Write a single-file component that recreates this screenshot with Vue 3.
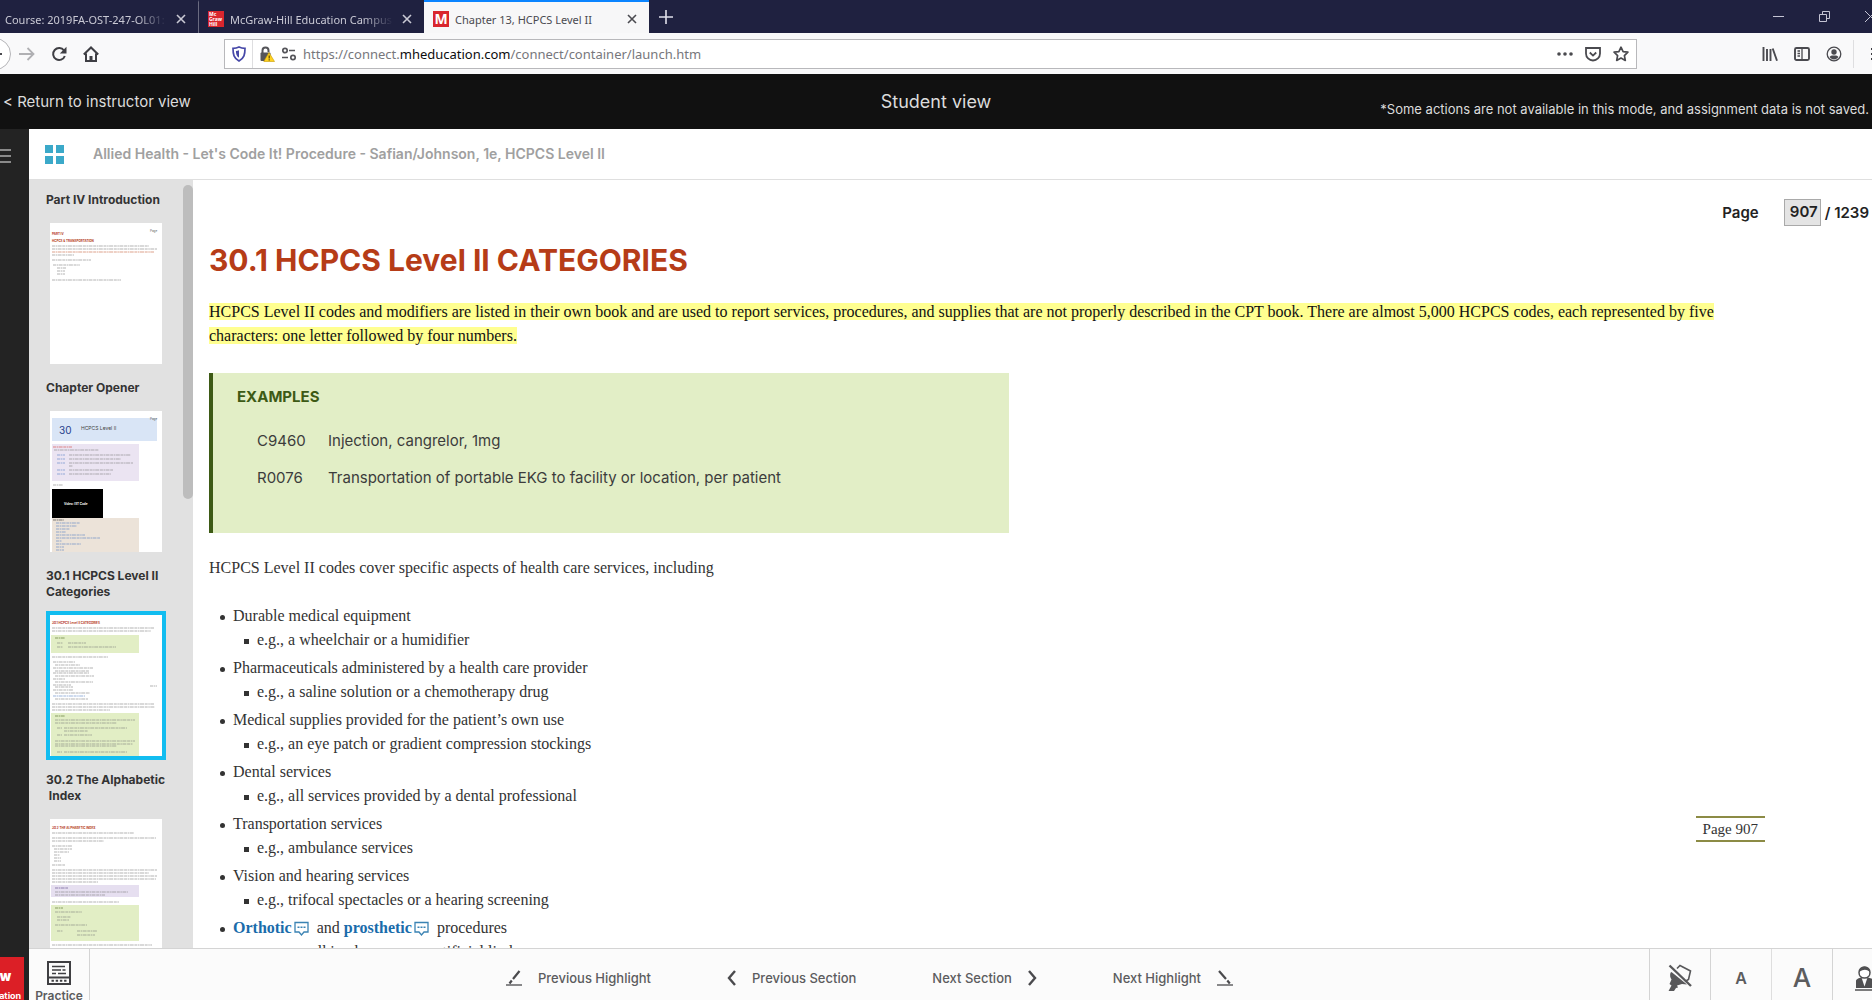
<template>
  <div class="screen">
    <header class="browser">
      <div class="tabs">
        <div
          v-for="tab in tabs"
          :key="tab.title"
          class="tab"
          :class="{ active: tab.active, first: tab.first }"
        >
          <svg v-if="tab.icon === 'mgh'" class="favicon" viewBox="0 0 16 16" aria-hidden="true">
            <rect width="16" height="16" fill="#d9262e" />
            <text x="1" y="5" class="fav-small">Mc</text>
            <text x="1" y="10" class="fav-small">Graw</text>
            <text x="1" y="15" class="fav-small">Hill</text>
          </svg>
          <svg v-if="tab.icon === 'm'" class="favicon" viewBox="0 0 16 16" aria-hidden="true">
            <rect width="16" height="16" fill="#d9262e" />
            <text x="8" y="13" text-anchor="middle" class="fav-big">M</text>
          </svg>
          <span class="tab-title" :class="{ faded: !tab.active }">{{ tab.title }}</span>
          <button class="tab-close" aria-label="Close tab">
            <svg width="10" height="10" viewBox="0 0 10 10">
              <path d="M1 1l8 8M9 1l-8 8" stroke="currentColor" stroke-width="1.6" />
            </svg>
          </button>
        </div>
        <button class="new-tab" aria-label="New tab">
          <svg width="14" height="14" viewBox="0 0 14 14">
            <path d="M7 0v14M0 7h14" stroke="#e0e0ea" stroke-width="1.6" />
          </svg>
        </button>
        <div class="window-buttons">
          <button aria-label="Minimize">
            <svg width="11" height="11" viewBox="0 0 11 11"><path d="M0 5.5h11" stroke="#c4c4d4" /></svg>
          </button>
          <button aria-label="Restore">
            <svg width="11" height="11" viewBox="0 0 11 11">
              <path d="M.5 3.5h7v7h-7zM3.5 3V.5h7v7H8" fill="none" stroke="#c4c4d4" />
            </svg>
          </button>
          <button aria-label="Close window">
            <svg width="11" height="11" viewBox="0 0 11 11">
              <path d="M0 0l11 11M11 0L0 11" stroke="#c4c4d4" />
            </svg>
          </button>
        </div>
      </div>

      <div class="toolbar">
        <div class="nav-buttons">
          <button class="back" aria-label="Back">
            <svg width="16" height="16" viewBox="0 0 16 16">
              <path d="M15 8H2M8 2L2 8l6 6" fill="none" stroke="#4a4a4f" stroke-width="2" />
            </svg>
          </button>
          <button aria-label="Forward">
            <svg width="16" height="16" viewBox="0 0 16 16">
              <path d="M0 8h14M8.500 2l6 6-6 6" fill="none" stroke="#b0b0b3" stroke-width="1.8" />
            </svg>
          </button>
          <button aria-label="Reload">
            <svg width="16" height="16" viewBox="0 0 16 16">
              <path d="M13 4.500A6 6 0 1 0 13.800 10" fill="none" stroke="#3f3f44" stroke-width="2" />
              <path d="M15.500 .8v6.700H8.800z" fill="#3f3f44" />
            </svg>
          </button>
          <button aria-label="Home">
            <svg width="16" height="16" viewBox="0 0 16 16">
              <path d="M.8 8.500L8 1.500l7.200 7M3 7.500V15h10V7.500" fill="none" stroke="#3f3f44" stroke-width="2" />
              <path d="M6.500 15v-5h3v5" fill="#3f3f44" />
            </svg>
          </button>
        </div>

        <form class="url-bar" @submit.prevent>
          <svg width="14" height="16" viewBox="0 0 14 16" aria-hidden="true">
            <path d="M7 1C5 2 3 2.300 1 2.300c0 6 .8 10 6 12.700 5.200-2.700 6-6.700 6-12.700-2 0-4-.3-6-1.300z" fill="none" stroke="#4648a8" stroke-width="1.7" />
            <path d="M7 4.200v7.600C4.400 10 4 7.500 3.900 4.900 5 4.800 6 4.600 7 4.200z" fill="#4648a8" />
          </svg>
          <span class="divider"></span>
          <svg width="16" height="16" viewBox="0 0 16 16" aria-hidden="true">
            <path d="M3.500 7V4.500a3 3 0 0 1 6 0V6" fill="none" stroke="#55555a" stroke-width="2" />
            <rect x="1.500" y="6.500" width="10" height="8.500" rx="1" fill="#55555a" />
            <path d="M10 6.500l5.500 9H4.800z" fill="#ffd21f" stroke="#c79a00" stroke-width=".6" />
            <path d="M10.200 9.500v3M10.200 13.300v1.200" stroke="#5b4400" stroke-width="1.200" />
          </svg>
          <svg width="16" height="16" viewBox="0 0 16 16" aria-hidden="true">
            <g fill="none" stroke="#55555a" stroke-width="1.700">
              <circle cx="4" cy="4.500" r="2.200" />
              <path d="M8 4.500h6M1 11.500h6" />
              <circle cx="12" cy="11.500" r="2.200" />
            </g>
          </svg>
          <label class="url-text" for="url">
            https://connect.<b>mheducation.com</b>/connect/container/launch.htm
          </label>
          <input id="url" class="url-input" type="text" aria-label="Address" />
          <button type="button" aria-label="Page actions">
            <svg width="16" height="16" viewBox="0 0 16 16" fill="#4a4a4f">
              <circle cx="2" cy="8" r="1.800" /><circle cx="8" cy="8" r="1.800" /><circle cx="14" cy="8" r="1.800" />
            </svg>
          </button>
          <button type="button" aria-label="Save to Pocket">
            <svg width="16" height="16" viewBox="0 0 16 16" fill="none" stroke="#4a4a4f" stroke-width="1.800">
              <path d="M1 2h14v5.500a7 7 0 0 1-14 0z" /><path d="M4.800 6.500L8 9.600l3.200-3.100" />
            </svg>
          </button>
          <button type="button" aria-label="Bookmark">
            <svg width="16" height="16" viewBox="0 0 16 16">
              <path d="M8 1.200l2.100 4.400 4.800.6-3.500 3.400.9 4.800L8 12.100l-4.300 2.300.9-4.800L1.100 6.200l4.800-.6z" fill="none" stroke="#4a4a4f" stroke-width="1.700" stroke-linejoin="round" />
            </svg>
          </button>
        </form>

        <div class="tools">
          <button aria-label="Library">
            <svg width="16" height="16" viewBox="0 0 16 16">
              <path d="M1.500 1v14M5 3v12M8.500 3v12M10.700 2.500L15 14.800" stroke="#4a4a4f" stroke-width="1.900" />
            </svg>
          </button>
          <button aria-label="Sidebars">
            <svg width="16" height="16" viewBox="0 0 16 16" fill="none" stroke="#4a4a4f">
              <rect x="1" y="2" width="14" height="12" rx="1.500" stroke-width="1.900" />
              <path d="M8 2v12M3.500 5h2.500M3.500 7.500h2.500M3.500 10h2.500" stroke-width="1.300" />
            </svg>
          </button>
          <button aria-label="Account">
            <svg width="16" height="16" viewBox="0 0 16 16">
              <circle cx="8" cy="8" r="6.800" fill="none" stroke="#4a4a4f" stroke-width="1.300" />
              <circle cx="8" cy="6" r="2.700" fill="#4a4a4f" />
              <path d="M3.600 11c1-1.800 2.500-1.600 4.400-1.600s3.400-.2 4.400 1.600c-1 1.600-2.600 2.500-4.400 2.500s-3.400-.9-4.400-2.500z" fill="#4a4a4f" />
            </svg>
          </button>
          <span class="divider"></span>
          <button class="menu" aria-label="Menu">
            <svg width="16" height="16" viewBox="0 0 16 16">
              <path d="M1 3h14M1 8h14M1 13h14" stroke="#3f3f44" stroke-width="2" />
            </svg>
          </button>
        </div>
      </div>
    </header>

    <div class="student-bar">
      <a href="#" class="return">&lt; Return to instructor view</a>
      <span class="mode">Student view</span>
      <span class="notice">*Some actions are not available in this mode, and assignment data is not saved.</span>
    </div>

    <div class="app">
      <aside class="rail">
        <button class="rail-menu" aria-label="Open menu">
          <svg width="20" height="16" viewBox="0 0 20 16">
            <path d="M0 2h20M0 8h20M0 14h20" stroke="#8a8a8a" stroke-width="2" />
          </svg>
        </button>
        <div class="logo">
          <div class="logo-text">
            <strong>Graw</strong>
            <span class="hill">Hill</span>
            <span>Education</span>
          </div>
        </div>
      </aside>

      <div class="reader">
        <div class="book-bar">
          <button class="grid-button" aria-label="Show thumbnails">
            <i></i><i></i><i></i><i></i>
          </button>
          <h1>Allied Health - Let's Code It! Procedure - Safian/Johnson, 1e, HCPCS Level II</h1>
        </div>

        <div class="body">
          <nav class="thumbs" aria-label="Sections">
            <div v-for="section in sections" :key="section.title" class="thumb-item">
              <h2>{{ section.title }}</h2>
              <button class="thumb" :class="{ current: section.current }" :aria-label="section.title">
                <svg viewBox="0 0 112 141" width="112" height="141">
                  <rect width="112" height="141" fill="#fff" />
                  <rect
                    v-for="(b, i) in section.blocks"
                    :key="'b' + i"
                    :x="b[0]" :y="b[1]" :width="b[2]" :height="b[3]" :fill="b[4]"
                  />
                  <path
                    v-for="(l, i) in section.lines"
                    :key="'l' + i"
                    :d="`M${l[0]} ${l[1]}h${l[2]}`"
                    :stroke="l[3] || '#777'"
                    stroke-width="1"
                    stroke-dasharray="3 .6 1.500 .5 4 .7"
                    opacity=".55"
                  />
                  <text
                    v-for="(t, i) in section.texts"
                    :key="'t' + i"
                    :x="t[0]" :y="t[1]" :font-size="t[2]" :fill="t[3]" :font-weight="t[4]"
                  >{{ t[5] }}</text>
                </svg>
              </button>
            </div>
            <span class="scrollbar"></span>
          </nav>

          <main class="page">
            <form class="pager" @submit.prevent>
              <label for="page-number">Page</label>
              <input id="page-number" v-model="page" type="text" />
              <span>/ 1239</span>
            </form>

            <article>
              <h2>30.1 HCPCS Level II CATEGORIES</h2>
              <p>
                <mark>HCPCS Level II codes and modifiers are listed in their own book and are used to report services, procedures, and supplies that are not properly described in the CPT book. There are almost 5,000 HCPCS codes, each represented by five characters: one letter followed by four numbers.</mark>
              </p>

              <section class="examples">
                <h3>EXAMPLES</h3>
                <table>
                  <tbody>
                    <tr v-for="row in examples" :key="row.code">
                      <td class="code">{{ row.code }}</td>
                      <td>{{ row.text }}</td>
                    </tr>
                  </tbody>
                </table>
              </section>

              <p>HCPCS Level II codes cover specific aspects of health care services, including</p>

              <div class="list-row">
                <ul class="services">
                  <li v-for="s in services" :key="s.name">
                    {{ s.name }}
                    <ul>
                      <li>{{ s.example }}</li>
                    </ul>
                  </li>
                  <li>
                    <template v-for="term in terms" :key="term.word">
                      <a href="#">{{ term.word
                        }}<svg width="15" height="15" viewBox="0 0 15 15" aria-hidden="true">
                          <path d="M1 1.500h13v9.500h-4L7.500 14 5 11H1z" fill="none" stroke="#3b83b3" stroke-width="1.300" />
                          <path d="M3.500 6.300h2M6.500 6.300h2M9.500 6.300h2" stroke="#3b83b3" stroke-width="1.500" />
                        </svg></a>
                      <span class="after">{{ term.after }}</span>
                    </template>
                    <ul>
                      <li>e.g., a walking brace or an artificial limb</li>
                    </ul>
                  </li>
                </ul>
                <span class="page-mark">Page 907</span>
              </div>
            </article>
          </main>
        </div>

        <footer class="bottom">
          <button class="practice">
            <svg width="24" height="24" viewBox="0 0 24 24">
              <g fill="none" stroke="#3f3f42" stroke-width="2">
                <path d="M1 1h22v22H1zM1 16.500h22" />
                <path d="M5 5.500h13M5 9h9M15.500 9h3M5 12.500h4M11 12.500h8" stroke-width="1.500" />
                <path d="M4.500 19.800h15" stroke-dasharray="2.400 1.800" />
              </g>
            </svg>
            Practice
          </button>
          <div class="pages">
            <button>
              <svg width="16" height="16" viewBox="0 0 16 16">
                <path d="M13.500 1L7 9M5.800 10.500l-2.300 3" stroke="#4a4a4d" stroke-width="2.200" />
                <path d="M0 15h16" stroke="#4a4a4d" stroke-width="1.300" />
              </svg>
              Previous Highlight
            </button>
            <button>
              <svg width="9" height="16" viewBox="0 0 9 16">
                <path d="M8 1L2 8l6 7" fill="none" stroke="#4a4a4d" stroke-width="2.400" />
              </svg>
              Previous Section
            </button>
            <button>
              Next Section
              <svg width="9" height="16" viewBox="0 0 9 16">
                <path d="M1 1l6 7-6 7" fill="none" stroke="#4a4a4d" stroke-width="2.400" />
              </svg>
            </button>
            <button>
              Next Highlight
              <svg width="16" height="16" viewBox="0 0 16 16">
                <path d="M2 1l7 8M10.300 10.500l2.500 3" stroke="#4a4a4d" stroke-width="2.200" />
                <path d="M0 15h16" stroke="#4a4a4d" stroke-width="1.300" />
              </svg>
            </button>
          </div>
          <button class="cell" aria-label="Highlighter off">
            <svg width="24" height="28" viewBox="0 0 24 28">
              <path d="M9 4.500l3-3L22.500 7l-2 8.500-3.500 2" fill="none" stroke="#58585a" stroke-width="1.600" />
              <path d="M3.500 8l-1 .8c-.8 2.500-.3 5 1 6.700L1.500 20l2 1.500L.5 27h5.500l2-3 2-.5-1-2 5-1.500 5 .5z" fill="#58585a" />
              <path d="M1.500 1.500l21.500 20.500" stroke="#58585a" stroke-width="2.400" />
            </svg>
          </button>
          <div class="cell wide">
            <button class="small-a" aria-label="Smaller text">A</button>
            <button class="large-a" aria-label="Larger text">A</button>
          </div>
          <button class="cell person" aria-label="Read aloud">
            <svg width="20" height="26" viewBox="0 0 20 26">
              <path d="M4 7.500a5.500 5.500 0 0 1 11 0c0 3-2 5.500-5.500 5.500S4 10.500 4 7.500z" fill="#fff" stroke="#505052" stroke-width="1.500" />
              <path d="M4 7c0-7 11-7 11 0-4-3-6-3-11 0z" fill="#505052" />
              <path d="M1 23V16c0-2 3-3 5.500-3.500l3 9 3-9C15 13 19 14 19 16v7z" fill="#505052" />
              <path d="M0 25h20" stroke="#505052" stroke-width="1.500" />
            </svg>
          </button>
        </footer>
      </div>
    </div>
  </div>
</template>

<script setup>
import { ref } from "vue";

const page = ref("907");

const tabs = [
  { title: "Course: 2019FA-OST-247-OL01: Proc", first: true },
  { title: "McGraw-Hill Education Campus", icon: "mgh" },
  { title: "Chapter 13, HCPCS Level II", icon: "m", active: true },
];

const examples = [
  { code: "C9460", text: "Injection, cangrelor, 1mg" },
  { code: "R0076", text: "Transportation of portable EKG to facility or location, per patient" },
];

const services = [
  { name: "Durable medical equipment", example: "e.g., a wheelchair or a humidifier" },
  { name: "Pharmaceuticals administered by a health care provider", example: "e.g., a saline solution or a chemotherapy drug" },
  { name: "Medical supplies provided for the patient’s own use", example: "e.g., an eye patch or gradient compression stockings" },
  { name: "Dental services", example: "e.g., all services provided by a dental professional" },
  { name: "Transportation services", example: "e.g., ambulance services" },
  { name: "Vision and hearing services", example: "e.g., trifocal spectacles or a hearing screening" },
];

const terms = [
  { word: "Orthotic", after: "and" },
  { word: "prosthetic", after: "procedures" },
];

const blue = "#4a78c0";

// blocks: x, y, width, height, fill
// lines: x, y, width, colour
// texts: x, y, size, fill, weight, string
const sections = [
  {
    title: "Part IV Introduction",
    blocks: [],
    lines: [
      [2, 23, 97], [2, 26, 105], [2, 29, 102, "#c0562c"], [2, 32, 22],
      [2, 37, 39], [3, 42, 27], [7, 45, 9], [7, 48, 8], [7, 51, 8], [2, 57, 69],
    ],
    texts: [
      [100, 9, 3, "#666", 400, "Page"],
      [2, 12, 3, "#b4391a", 700, "PART IV"],
      [2, 19, 3, "#b4391a", 700, "HCPCS & TRANSPORTATION"],
    ],
  },
  {
    title: "Chapter Opener",
    blocks: [
      [2, 7, 105, 23, "#d9e5f6"],
      [2, 33, 87, 37, "#ebe4f2"],
      [2, 78, 51, 29, "#000"],
      [2, 107, 87, 34, "#ece3d9"],
    ],
    lines: [
      [3, 36, 19, "#d0342c"], [4, 39, 45],
      [7, 44, 8, blue], [19, 44, 62], [7, 48, 8, blue], [19, 48, 52],
      [7, 52, 8, blue], [19, 52, 64], [19, 55, 4],
      [7, 59, 8, blue], [19, 59, 44], [7, 63, 8, blue], [19, 63, 42],
      [3, 74, 10], [3, 109, 11, "#222"],
      [6, 112, 24, blue], [6, 115, 21, blue], [6, 118, 14, blue], [6, 121, 10, blue],
      [6, 124, 29, blue], [6, 127, 44, blue], [6, 130, 6, blue], [6, 133, 25, blue],
      [6, 136, 8, blue], [6, 139, 8, blue],
    ],
    texts: [
      [100, 9, 3, "#666", 400, "Page"],
      [9, 23, 10, "#27408b", 400, "30"],
      [31, 19, 5, "#444", 400, "HCPCS Level II"],
      [14, 94, 3, "#fff", 700, "Video: IST Code"],
    ],
  },
  {
    title: "30.1 HCPCS Level II\nCategories",
    current: true,
    blocks: [
      [1, 20, 88, 18, "#e2eec5"],
      [1, 98, 88, 43, "#e2eec5"],
    ],
    lines: [
      [2, 13, 102, "#777"], [2, 16, 99],
      [5, 23, 10, "#3b5b10"], [7, 28, 6], [18, 28, 18], [7, 32, 6], [18, 32, 48],
      [2, 42, 56], [3, 47, 22], [5, 50, 25], [3, 53, 40], [5, 56, 34], [3, 58, 36],
      [5, 61, 39], [3, 64, 12], [5, 67, 38], [3, 70, 18], [5, 72, 18], [3, 75, 20],
      [5, 78, 35], [3, 81, 32, blue], [5, 84, 33], [100, 71, 7],
      [2, 89, 102], [2, 92, 103], [2, 95, 58],
      [5, 101, 10, "#3b5b10"], [5, 105, 80], [5, 108, 62], [7, 113, 5], [14, 113, 63], [14, 116, 24],
      [7, 120, 5], [14, 120, 28], [5, 126, 80], [5, 129, 78], [5, 131, 62], [7, 137, 5], [14, 137, 63],
    ],
    texts: [[2, 9, 3, "#b4391a", 700, "30.1 HCPCS Level II CATEGORIES"]],
  },
  {
    title: "30.2 The Alphabetic\n Index",
    blocks: [
      [1, 66, 88, 12, "#e6dff0"],
      [1, 86, 88, 36, "#e2eec5"],
    ],
    lines: [
      [2, 14, 82], [2, 19, 104], [2, 22, 52], [2, 27, 20], [4, 30, 18], [4, 33, 15],
      [4, 36, 6], [4, 39, 7], [4, 42, 7], [2, 46, 13],
      [2, 51, 105], [2, 54, 97], [2, 57, 105], [2, 60, 104], [2, 63, 46],
      [5, 69, 13, "#49307a"], [5, 73, 73], [5, 76, 50], [2, 83, 67],
      [5, 89, 8, "#3b5b10"], [5, 93, 27], [7, 98, 14], [7, 101, 12], [5, 106, 32],
      [7, 112, 6], [27, 112, 20], [27, 116, 18], [2, 126, 100],
    ],
    texts: [[2, 10, 3, "#b4391a", 700, "30.2 THE ALPHABETIC INDEX"]],
  },
];
</script>

<style>
body {
  margin: 0;
  overflow: hidden;
}
</style>

<style scoped>
.screen {
  display: flex;
  flex-direction: column;
  height: 100vh;
  overflow: hidden;
  background: #fff;
  font-family: Inter, "Liberation Sans", sans-serif;
}

button {
  display: flex;
  align-items: center;
  justify-content: center;
  padding: 0;
  border: none;
  background: none;
  font: inherit;
  color: inherit;
  cursor: pointer;
}

svg {
  flex: none;
}

h1,
h2,
h3,
p,
ul {
  margin: 0;
  padding: 0;
}

.browser {
  flex: none;
  font-family: "Noto Sans", "Open Sans", sans-serif;
}

.tabs {
  display: flex;
  height: 33px;
  background: #1f2140;
  color: #c9c9d4;
  font-size: 11px;
}

.tab {
  display: flex;
  align-items: center;
  box-sizing: border-box;
  width: 225px;
  padding: 3px 9px 0;
  gap: 6px;
  border-top: 2px solid transparent;
}

.tab.first {
  width: 199px;
  padding-left: 5px;
  border-right: 1px solid #6a6b80;
}

.tab.active {
  background: #f7f7f8;
  border-top-color: #0a84ff;
  color: #4a4a50;
}

.favicon {
  width: 16px;
  height: 16px;
}

.fav-small {
  fill: #fff;
  font-size: 5px;
  font-weight: 700;
}

.fav-big {
  fill: #fff;
  font-size: 14px;
  font-weight: 700;
}

.tab-title {
  flex: 1;
  overflow: hidden;
  white-space: nowrap;
}

.tab-title.faded {
  mask-image: linear-gradient(to left, transparent, #000 30px);
}

.tab-close {
  width: 16px;
  height: 16px;
}

.new-tab {
  width: 34px;
}

.window-buttons {
  display: flex;
  margin-left: auto;
  margin-right: -21px;
}

.window-buttons button {
  width: 46px;
}

.toolbar {
  display: flex;
  align-items: center;
  height: 41px;
  background: #f9f9fa;
}

.nav-buttons {
  display: flex;
  align-items: center;
  gap: 16px;
  margin-left: -21px;
}

.nav-buttons .back {
  width: 32px;
  height: 32px;
  margin-right: -8px;
  box-sizing: border-box;
  border: 1px solid #b5b5b8;
  border-radius: 50%;
  background: #fff;
}

.url-bar {
  display: flex;
  flex: 1;
  align-items: center;
  box-sizing: border-box;
  height: 30px;
  margin-left: 125px;
  padding: 0 7px;
  gap: 6px;
  border: 1px solid #b8b8bb;
  background: #fff;
}

.divider {
  width: 1px;
  height: 28px;
  background: #dedee0;
}

.url-text {
  font-size: 13px;
  color: #77777c;
  white-space: nowrap;
}

.url-text b {
  font-weight: 400;
  color: #0c0c0d;
}

.url-input {
  flex: 1;
  min-width: 0;
  border: none;
  outline: none;
  font: inherit;
}

.url-bar button {
  margin-left: 6px;
}

.tools {
  display: flex;
  align-items: center;
  gap: 16px;
  margin-left: 125px;
}

.tools .divider {
  margin-left: -5px;
}

.tools .menu {
  margin-right: -14px;
}

.student-bar {
  display: grid;
  flex: none;
  grid-template-columns: 1fr auto 1fr;
  align-items: center;
  height: 55px;
  padding: 0 3px;
  background: #111;
  color: #dcdcdc;
}

.return {
  font-size: 15px;
  color: inherit;
  text-decoration: none;
}

.mode {
  font-size: 18px;
}

.notice {
  justify-self: end;
  padding-top: 14px;
  font-size: 13px;
}

.app {
  display: flex;
  flex: 1;
  min-height: 0;
}

.rail {
  display: flex;
  flex: none;
  flex-direction: column;
  justify-content: space-between;
  width: 29px;
  overflow: hidden;
  background: #232323;
}

.rail-menu {
  align-self: flex-start;
  margin: 19px 0 0 -9px;
}

.logo {
  width: 24px;
  height: 43px;
  overflow: hidden;
  background: #dc1f26;
  color: #fff;
}

.logo-text {
  display: flex;
  flex-direction: column;
  margin: 12px 0 0 -23px;
  font-size: 9px;
  font-weight: 700;
  line-height: 10px;
}

.logo-text strong {
  font-size: 13px;
  line-height: 14px;
}

.logo-text .hill {
  padding-left: 8px;
  line-height: 8px;
}

.reader {
  display: flex;
  flex: 1;
  flex-direction: column;
  min-width: 0;
}

.book-bar {
  display: flex;
  flex: none;
  align-items: center;
  height: 50px;
  padding-left: 16px;
  gap: 29px;
  border-bottom: 1px solid #dfdfdf;
}

.grid-button {
  display: grid;
  grid-template-columns: 8px 8px;
  gap: 3px;
}

.grid-button i {
  width: 8px;
  height: 8px;
  background: #3ba9c9;
}

.book-bar h1 {
  font-size: 14px;
  font-weight: 600;
  line-height: 20px;
  color: #a0a0a0;
}

.body {
  display: flex;
  flex: 1;
  min-height: 0;
}

.thumbs {
  position: relative;
  flex: none;
  box-sizing: border-box;
  width: 164px;
  padding: 12px 16px 0 17px;
  overflow: hidden;
  background: #e1e1e1;
}

.thumb-item h2 {
  font-size: 12px;
  font-weight: 700;
  line-height: 16px;
  white-space: pre-wrap;
  color: #333;
}

.thumb {
  margin: 11px 0 12px;
  border: 4px solid transparent;
}

.thumb.current {
  border-color: #12bdf0;
}

.scrollbar {
  position: absolute;
  top: 5px;
  right: 0;
  width: 10px;
  height: 314px;
  border-radius: 5px;
  background: #bdbdbd;
}

.page {
  flex: 1;
  min-width: 0;
  overflow: hidden;
}

.pager {
  display: flex;
  align-items: center;
  justify-content: flex-end;
  padding: 19px 3px 0 0;
  font-size: 15px;
  font-weight: 600;
  color: #222;
}

.pager input {
  box-sizing: border-box;
  width: 37px;
  height: 27px;
  margin: 0 4px 0 25px;
  padding: 0 2px 2px;
  border: 1px solid #a9a9a9;
  background: #e4e4e4;
  font: inherit;
  color: inherit;
  text-align: right;
}

article {
  padding: 17px 107px 0 16px;
  font-family: "Liberation Serif", "Times New Roman", serif;
  font-size: 16px;
  line-height: 24px;
  color: #333;
}

article h2 {
  margin-bottom: 23px;
  font-family: Inter, sans-serif;
  font-size: 30px;
  font-weight: 700;
  line-height: 34px;
  color: #b63c17;
}

mark {
  background: #ffff90;
  color: #111;
}

.examples {
  box-sizing: border-box;
  max-width: 800px;
  margin: 25px 0 23px;
  padding: 12px 24px 37px;
  border-left: 4px solid #3d5a15;
  background: #e2eec6;
  font-family: Inter, sans-serif;
}

.examples h3 {
  font-size: 15px;
  font-weight: 700;
  color: #3d5a15;
}

.examples table {
  margin: 13px 0 0 20px;
  border-collapse: collapse;
  font-size: 15px;
}

.examples td {
  height: 37px;
  padding: 0;
  color: #3c3c3c;
}

.examples .code {
  width: 71px;
}

.list-row {
  display: flex;
  justify-content: space-between;
  margin-top: 24px;
}

.services,
.services ul {
  padding-left: 24px;
  list-style: none;
}

.services li {
  margin-bottom: 4px;
}

.services li::before {
  content: "";
  display: inline-block;
  width: 5px;
  height: 5px;
  margin: 0 8px 0 -13px;
  border-radius: 50%;
  background: #333;
  vertical-align: 1px;
}

.services ul li::before {
  border-radius: 0;
}

.services a {
  font-weight: 700;
  color: #1a6cab;
  text-decoration: none;
}

.services a svg {
  margin-left: 2px;
  vertical-align: -3px;
}

.after {
  margin: 0 4px 0 8px;
}

.page-mark {
  flex: none;
  align-self: flex-start;
  margin-top: 212px;
  padding: 0 7px;
  border-top: 2px solid #8c8b45;
  border-bottom: 2px solid #8c8b45;
  font-size: 15px;
  line-height: 22px;
}

.bottom {
  display: flex;
  flex: none;
  height: 52px;
  box-sizing: border-box;
  border-top: 1px solid #d4d4d4;
  background: #fbfbfb;
  color: #5c5c5e;
  font-size: 13px;
  font-weight: 500;
}

.practice {
  flex-direction: column;
  justify-content: flex-start;
  width: 61px;
  padding-top: 12px;
  gap: 3px;
  overflow: hidden;
  border-right: 1px solid #d4d4d4;
  font-size: 12px;
  font-weight: 600;
}

.pages {
  display: flex;
  flex: 1;
  align-items: center;
  justify-content: center;
  padding-top: 6px;
  gap: 76px;
}

.pages button {
  gap: 16px;
}

.cell {
  width: 61px;
  padding-top: 6px;
  box-sizing: border-box;
  border-left: 1px solid #d4d4d4;
}

.cell.wide {
  display: flex;
  width: 122px;
  padding-top: 0;
}

.cell.wide button {
  flex: 1;
  padding-top: 6px;
}

.small-a {
  font-size: 16px;
  font-weight: 600;
}

.cell.wide .large-a {
  border-left: 1px solid #dedede;
  font-size: 26px;
  font-weight: 500;
}

.cell.person {
  justify-content: flex-start;
  width: 40px;
  padding-left: 22px;
  overflow: hidden;
}
</style>
